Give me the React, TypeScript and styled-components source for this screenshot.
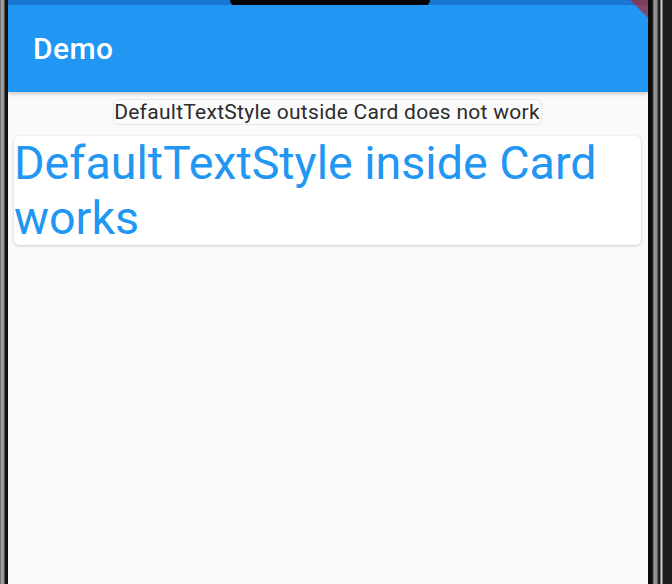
import * as React from "react";
import styled, { createGlobalStyle } from "styled-components";

const colour = {
  primary: "#2196F3",
  primaryDark: "#1976D2",
  background: "#FAFAFA",
  text: "#2c2c2c",
  frame: "#0c0c0c",
};

const GlobalStyle = createGlobalStyle`
  html, body {
    margin: 0;
    padding: 0;
    background: ${colour.frame};
  }
  * {
    box-sizing: border-box;
  }
`;

const Device = styled.div`
  display: flex;
  width: 672px;
  height: 584px;
  overflow: hidden;
  font-family: Roboto, "Noto Sans", sans-serif;
`;

const LeftBezel = styled.div`
  width: 8px;
  flex-shrink: 0;
  background: linear-gradient(
    to right,
    #5a5a5a 0,
    #8f8f8f 1px,
    #a6a6a6 2px,
    #8a8a8a 4px,
    #1a1a1a 5px,
    #0a0a0a 8px
  );
`;

const RightBezel = styled.div`
  width: 24px;
  flex-shrink: 0;
  background: linear-gradient(
    to right,
    #0b0b0b 0,
    #0b0b0b 4px,
    #3a3a3a 5px,
    #9a9a9a 6px,
    #8a8a8a 9px,
    #2a2a2a 10px,
    #161616 12px,
    #d0d0d0 13px,
    #d0d0d0 14px,
    #1d1d1d 15px,
    #1d1d1d 24px
  );
`;

const Screen = styled.div`
  position: relative;
  flex: 1;
  display: flex;
  flex-direction: column;
  background: ${colour.background};
  overflow: hidden;
`;

const StatusBar = styled.div`
  position: relative;
  height: 5px;
  flex-shrink: 0;
  background: ${colour.primaryDark};
`;

const Notch = styled.div`
  position: absolute;
  top: 0;
  left: 222px;
  width: 200px;
  height: 6px;
  background: #050505;
  border-radius: 0 0 12px 12px;
`;

const DebugCorner = styled.div`
  position: absolute;
  top: 0;
  right: 0;
  width: 0;
  height: 0;
  border-top: 18px solid rgba(183, 28, 28, 0.63);
  border-left: 18px solid transparent;
  z-index: 3;
`;

const AppBar = styled.header`
  position: relative;
  z-index: 1;
  height: 87px;
  flex-shrink: 0;
  display: flex;
  align-items: center;
  padding: 0 0 0 25px;
  background: ${colour.primary};
  box-shadow: 0 2px 4px rgba(0, 0, 0, 0.2);
`;

const Title = styled.h1`
  margin: 0;
  font-size: 30px;
  font-weight: 500;
  color: #ffffff;
  letter-spacing: 0.4px;
`;

const Body = styled.main`
  flex: 1;
  display: flex;
  flex-direction: column;
  align-items: center;
  padding: 7px 7px 0 6px;
`;

const OutsideText = styled.div`
  font-size: 21px;
  line-height: 24px;
  letter-spacing: 0.28px;
  color: ${colour.text};
  border: 1px solid #e6e6e6;
  border-radius: 5px;
  background: #fbfbfb;
  padding: 0 1px 0 0;
`;

const Card = styled.section`
  align-self: stretch;
  margin-top: 11px;
  height: 109px;
  background: #ffffff;
  border-radius: 5px;
  box-shadow: 0 1px 3px rgba(0, 0, 0, 0.18), 0 0 1px rgba(0, 0, 0, 0.12);
`;

const CardText = styled.p`
  margin: 0;
  font-size: 46.6px;
  line-height: 54.5px;
  color: ${colour.primary};
`;

export default function App() {
  return (
    <>
      <GlobalStyle />
      <Device>
        <LeftBezel />
        <Screen>
          <StatusBar>
            <Notch />
          </StatusBar>
          <DebugCorner />
          <AppBar>
            <Title>Demo</Title>
          </AppBar>
          <Body>
            <OutsideText>DefaultTextStyle outside Card does not work</OutsideText>
            <Card>
              <CardText>DefaultTextStyle inside Card works</CardText>
            </Card>
          </Body>
        </Screen>
        <RightBezel />
      </Device>
    </>
  );
}
